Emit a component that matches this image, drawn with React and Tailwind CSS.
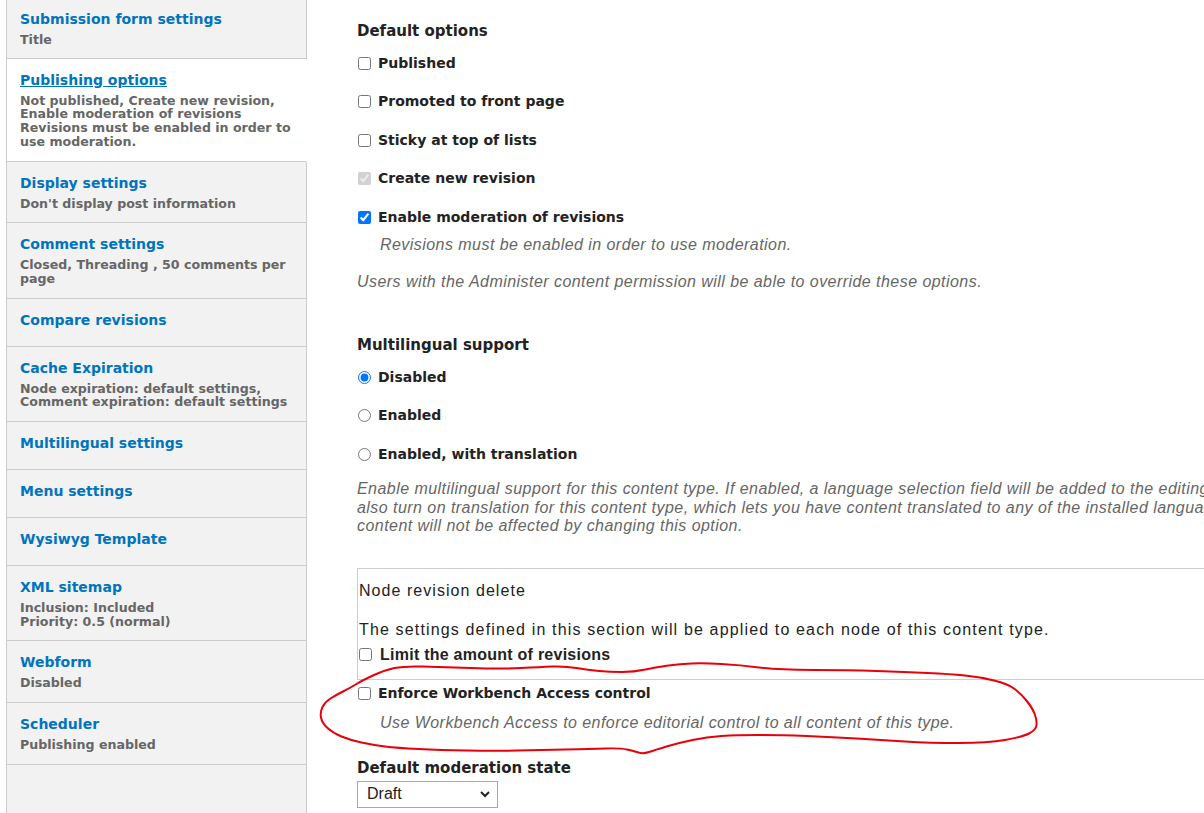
import React from 'react';

const tabs = [
  { title: 'Submission form settings', lines: ['Title'] },
  {
    title: 'Publishing options',
    lines: [
      'Not published, Create new revision,',
      'Enable moderation of revisions',
      'Revisions must be enabled in order to',
      'use moderation.',
    ],
    active: true,
  },
  { title: 'Display settings', lines: ["Don't display post information"] },
  { title: 'Comment settings', lines: ['Closed, Threading , 50 comments per', 'page'] },
  { title: 'Compare revisions', lines: [] },
  {
    title: 'Cache Expiration',
    lines: ['Node expiration: default settings,', 'Comment expiration: default settings'],
  },
  { title: 'Multilingual settings', lines: [] },
  { title: 'Menu settings', lines: [] },
  { title: 'Wysiwyg Template', lines: [] },
  { title: 'XML sitemap', lines: ['Inclusion: Included', 'Priority: 0.5 (normal)'] },
  { title: 'Webform', lines: ['Disabled'] },
  { title: 'Scheduler', lines: ['Publishing enabled'] },
];

// hand-drawn red loop around the workbench option
const loop = [
  [363, 680], [385, 670], [404, 666], [440, 667], [502, 669], [540, 667], [565, 666],
  [588, 670], [610, 672], [634, 672], [657, 667], [680, 664], [703, 663], [740, 665],
  [778, 670], [848, 670], [905, 672], [950, 674], [980, 677], [1008, 684], [1020, 693],
  [1032, 707], [1037, 720], [1036, 730], [1022, 737], [988, 743], [930, 743], [880, 740],
  [833, 737], [780, 735], [736, 735], [707, 737], [678, 743], [655, 750], [643, 754],
  [634, 751], [620, 748], [591, 749], [540, 750], [494, 751], [440, 750], [397, 748],
  [373, 745], [350, 740], [333, 733], [322, 723], [320, 712], [325, 702], [336, 695],
  [350, 688],
];

const smoothPath = (pts) => {
  const mid = (a, b) => [(a[0] + b[0]) / 2, (a[1] + b[1]) / 2];
  const n = pts.length;
  const start = mid(pts[n - 1], pts[0]);
  let d = `M${start[0]} ${start[1]}`;
  pts.forEach((p, i) => {
    const m = mid(p, pts[(i + 1) % n]);
    d += ` Q${p[0]} ${p[1]} ${m[0]} ${m[1]}`;
  });
  return d;
};

const Sidebar = () => (
  <div className="ml-[6px] w-[301px] shrink-0 flex flex-col border-l border-[#ccc] font-['DejaVu_Sans',sans-serif]">
    {tabs.map((tab, idx) => {
      const hasDesc = tab.lines.length > 0;
      const top = idx === 0 ? 'pt-[8px]' : 'pt-[10px]';
      const bottom = hasDesc ? (idx === 0 ? 'pb-[11px]' : 'pb-[12px]') : 'pb-[15px]';
      return (
        <div
          key={tab.title}
          className={`px-[13px] border-b border-[#ccc] ${top} ${bottom} ${
            tab.active ? 'bg-white border-r border-r-white' : 'bg-[#f2f2f2] border-r'
          }`}
        >
          <div className={`text-[14px] leading-[22px] font-bold text-[#0074bd] ${tab.active ? 'underline' : ''}`}>
            {tab.title}
          </div>
          {hasDesc && (
            <div className="mt-[3px]">
              {tab.lines.map((line) => (
                <div key={line} className="text-[12.6px] leading-[13.7px] font-bold text-[#666] whitespace-nowrap">
                  {line}
                </div>
              ))}
            </div>
          )}
        </div>
      );
    })}
    <div className="flex-1 bg-[#f2f2f2] border-r border-[#ccc]" />
  </div>
);

const Check = ({ label, checked, disabled }) => (
  <label className="flex items-center h-[20px]">
    <input type="checkbox" defaultChecked={checked} disabled={disabled} className="ml-[1px] w-[13px] h-[13px]" />
    <span className="ml-[7px] text-[14px] font-bold text-[#222] font-['DejaVu_Sans',sans-serif]">{label}</span>
  </label>
);

const Radio = ({ label, checked }) => (
  <label className="flex items-center h-[20px]">
    <input type="radio" name="multilingual" defaultChecked={checked} className="ml-[1px] w-[13px] h-[13px]" />
    <span className="ml-[7px] text-[14px] font-bold text-[#222] font-['DejaVu_Sans',sans-serif]">{label}</span>
  </label>
);

const Heading = ({ children, className = '' }) => (
  <h3 className={`text-[15px] leading-[20px] font-bold text-[#222] font-['DejaVu_Sans',sans-serif] ${className}`}>
    {children}
  </h3>
);

const Desc = ({ children, className = '' }) => (
  <p
    className={`font-['Liberation_Sans',Arial,sans-serif] italic text-[16px] tracking-[0.45px] leading-[20px] text-[#666] whitespace-nowrap ${className}`}
  >
    {children}
  </p>
);

const Main = () => (
  <div className="pl-[50px] pt-[21px] w-[1100px] shrink-0">
    <Heading>Default options</Heading>
    <div className="mt-[12px] flex flex-col gap-[18.5px]">
      <Check label="Published" />
      <Check label="Promoted to front page" />
      <Check label="Sticky at top of lists" />
      <Check label="Create new revision" checked disabled />
      <Check label="Enable moderation of revisions" checked />
    </div>
    <Desc className="mt-[8px] pl-[23px]">Revisions must be enabled in order to use moderation.</Desc>
    <Desc className="mt-[17px]">Users with the Administer content permission will be able to override these options.</Desc>

    <Heading className="mt-[43px]">Multilingual support</Heading>
    <div className="mt-[12px] flex flex-col gap-[18.5px]">
      <Radio label="Disabled" checked />
      <Radio label="Enabled" />
      <Radio label="Enabled, with translation" />
    </div>
    <div className="mt-[16px] font-['Liberation_Sans',Arial,sans-serif] italic text-[16px] tracking-[0.45px] leading-[18.5px] text-[#666] whitespace-nowrap">
      <div>
        Enable multilingual support for this content type. If enabled, a language selection field will be added to the editing
        form, allowing you to select from one of the enabled languages. You can
      </div>
      <div>
        also turn on translation for this content type, which lets you have content translated to any of the installed languages.
        If disabled, new posts are saved with the default language. Existing
      </div>
      <div>content will not be affected by changing this option.</div>
    </div>

    <div className="mt-[32px] border border-[#ccc] pl-px pt-[10px] pb-[14px] font-['Liberation_Sans',Arial,sans-serif] text-[#222]">
      <div className="text-[16px] tracking-[1.05px] leading-[24px]">Node revision delete</div>
      <div className="mt-[16px] text-[16px] tracking-[1.15px] leading-[22px]">
        The settings defined in this section will be applied to each node of this content type.
      </div>
      <label className="mt-[4px] flex items-center h-[20px]">
        <input type="checkbox" className="w-[13px] h-[13px]" />
        <span className="ml-[8px] text-[16px] tracking-[0.25px] font-bold">Limit the amount of revisions</span>
      </label>
    </div>

    <div className="mt-[4px]">
      <Check label="Enforce Workbench Access control" />
    </div>
    <Desc className="mt-[9px] pl-[23px]">Use Workbench Access to enforce editorial control to all content of this type.</Desc>

    <Heading className="mt-[25px]">Default moderation state</Heading>
    <div className="mt-[3px] w-[141px] h-[27px] border border-[#a9a9a9] flex items-center justify-between pl-[9px] pr-[6px] font-['Liberation_Sans',Arial,sans-serif] text-[16px] text-[#222]">
      <span>Draft</span>
      <svg width="12" height="12" viewBox="0 0 12 12" fill="none">
        <path d="M2 4l4 4 4-4" stroke="#222" strokeWidth="2" />
      </svg>
    </div>
  </div>
);

export default function App() {
  return (
    <div className="relative w-full h-[813px] overflow-hidden bg-white flex">
      <Sidebar />
      <Main />
      <svg className="absolute inset-0 pointer-events-none" width="1204" height="813" viewBox="0 0 1204 813" fill="none">
        <path d={smoothPath(loop)} stroke="#e8000b" strokeWidth="2" strokeLinejoin="round" />
      </svg>
    </div>
  );
}
